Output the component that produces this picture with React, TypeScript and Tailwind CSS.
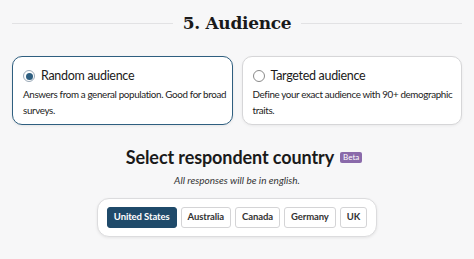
const countries = ["United States", "Australia", "Canada", "Germany", "UK"];

const App = () => {
  const selected = "United States";
  const audience = "random";

  return (
    <div className="w-[474px] h-[259px] bg-[#f7f7f8] overflow-hidden font-['Lato',sans-serif] text-[#1a1a1a]">
      {/* section title */}
      <div className="flex items-center gap-[10px] px-[12px] pt-[9px]">
        <div className="flex-1 h-px bg-[#e2e2e4]" />
        <h2 className="font-['DejaVu_Serif',serif] font-bold text-[17px] leading-[28px] tracking-[-0.3px]">
          5. Audience
        </h2>
        <div className="flex-1 h-px bg-[#e2e2e4]" />
      </div>

      {/* audience cards */}
      <div className="grid grid-cols-2 gap-[9px] px-[12px] mt-[19px]">
        <div
          className={
            "h-[69px] rounded-[10px] bg-white pl-[10px] pr-[3px] pt-[10px] " +
            (audience === "random" ? "border-[1.5px] border-[#2f5f80] shadow-[0_1px_3px_rgba(0,0,0,0.08)]" : "border border-[#d6d6d8]")
          }
        >
          <div className="flex items-center gap-[6px]">
            <span className="w-[12px] h-[12px] rounded-full border border-[#9aa9b7] flex items-center justify-center">
              <span className="w-[7px] h-[7px] rounded-full bg-[#2f5f80]" />
            </span>
            <span className="text-[12.5px] leading-[18px] tracking-[-0.3px]">Random audience</span>
          </div>
          <p className="text-[9.8px] leading-[16px] mt-[1px] tracking-[-0.35px] text-[#222]">
            Answers from a general population. Good for broad surveys.
          </p>
        </div>
        <div className="h-[69px] rounded-[10px] bg-white pl-[10px] pr-[3px] pt-[10px] border border-[#d6d6d8] shadow-[0_1px_3px_rgba(0,0,0,0.06)]">
          <div className="flex items-center gap-[6px]">
            <span className="w-[12px] h-[12px] rounded-full border border-[#8a8a8a]" />
            <span className="text-[12.5px] leading-[18px] tracking-[-0.3px]">Targeted audience</span>
          </div>
          <p className="text-[9.8px] leading-[16px] mt-[1px] tracking-[-0.35px] text-[#222]">
            Define your exact audience with 90+ demographic traits.
          </p>
        </div>
      </div>

      {/* country */}
      <div className="flex items-center justify-center gap-[6px] mt-[20px] pl-[14px]">
        <h3 className="font-bold text-[18px] leading-[24px] tracking-[-0.1px]">Select respondent country</h3>
        <span className="bg-[#8a6aaa] text-white text-[8px] leading-[11px] px-[3px] rounded-[2px] mt-[1px]">Beta</span>
      </div>
      <p className="text-center italic text-[10px] leading-[14px] mt-[4px] text-[#333]">
        All responses will be in english.
      </p>

      <div className="flex justify-center mt-[11px]">
        <div className="flex items-center gap-[4px] bg-white border border-[#dcdcde] rounded-[12px] px-[9px] py-[8px] shadow-[0_1px_3px_rgba(0,0,0,0.08)]">
          {countries.map((c) => (
            <button
              key={c}
              type="button"
              className={
                "h-[21px] px-[6px] rounded-[3px] text-[9.5px] tracking-[-0.1px] font-bold " +
                (c === selected
                  ? "bg-[#1f4a6a] text-white border border-[#1f4a6a]"
                  : "bg-white text-[#333] border border-[#d4d4d6]")
              }
            >
              {c}
            </button>
          ))}
        </div>
      </div>
    </div>
  );
};

export default App;
